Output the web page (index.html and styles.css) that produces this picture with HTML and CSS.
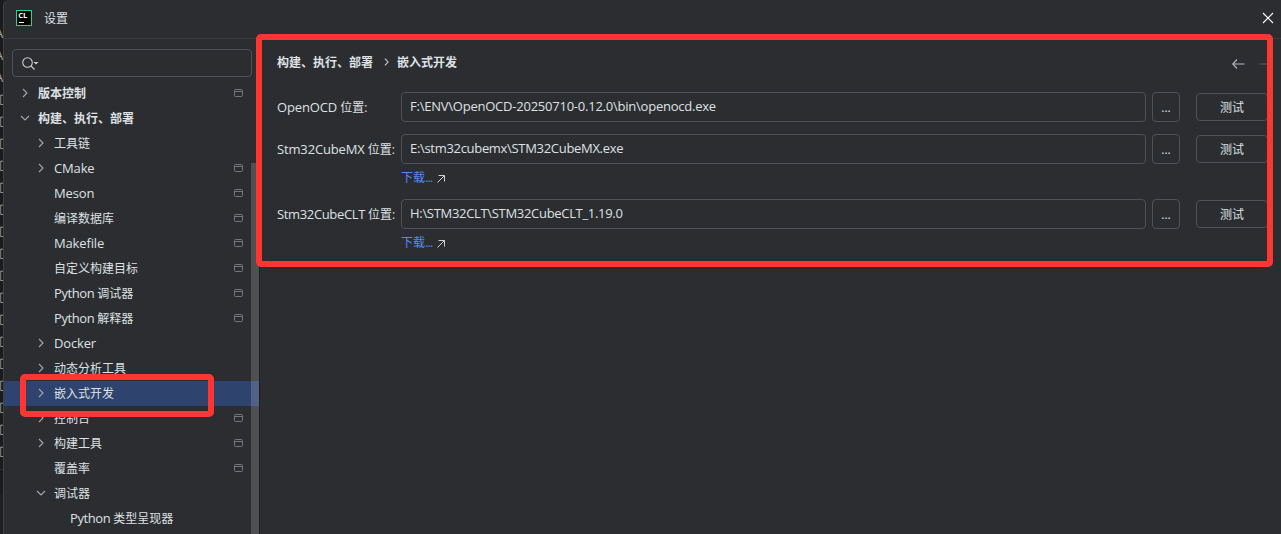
FILE: index.html
```
<!DOCTYPE html>
<html lang="zh-CN">
<head>
    <meta charset="UTF-8">
    <meta name="viewport" content="width=device-width, initial-scale=1.0">
    <title>设置</title>
    <link rel="stylesheet" href="styles.css">
</head>
<body>
    <!-- Shared icons -->
    <svg class="icon-defs" width="0" height="0">
        <symbol id="right" viewBox="0 0 16 16"><path d="M6 4l4 4-4 4" fill="none" stroke="#a4a7ae" stroke-width="1.1"/></symbol>
        <symbol id="down" viewBox="0 0 16 16"><path d="M4 6l4 4 4-4" fill="none" stroke="#a4a7ae" stroke-width="1.1"/></symbol>
        <symbol id="project" viewBox="0 0 10 9"><path d="M1.5.5h6q1 0 1 1v5q0 1-1 1h-6q-1 0-1-1v-5q0-1 1-1zM.5 2.5h8" fill="none" stroke="#74777e"/></symbol>
        <symbol id="external" viewBox="0 0 8 8"><path d="M.5 7.5l7-7M1.5.5h6v6" fill="none" stroke="#ced0d6"/></symbol>
    </svg>

    <div class="editor">
        <p>A</p><p>A</p><p>A</p><p>□</p><p>□</p><p>□</p><p>□</p><p>□</p><p>□</p><p>□</p>
        <p>□</p><p>□</p><p>□</p><p>□</p><p>□</p><p>□</p><p>□</p><p>□</p><p>□</p><p>□</p>
    </div>

    <div class="dialog">
        <header>
            <svg class="logo" width="16" height="16" viewBox="0 0 16 16">
                <rect x=".5" y=".5" width="15" height="15" fill="#000" stroke="#21d789"/>
                <text x="2.3" y="8" class="logo-text">CL</text>
                <path d="M3 12.5h5" stroke="#fff"/>
            </svg>
            <h1>设置</h1>
            <svg class="close" width="12" height="12" viewBox="0 0 12 12"><path d="M1 1l10 10M11 1L1 11" stroke="#fff" stroke-width="1.1"/></svg>
        </header>

        <div class="content">
            <aside>
                <div class="search">
                    <svg width="18" height="14" viewBox="0 0 18 14">
                        <circle cx="5.5" cy="5.5" r="4.8" fill="none" stroke="#ced0d6" stroke-width="1.1"/>
                        <path d="M9 9l3.5 3.5" stroke="#ced0d6" stroke-width="1.1"/>
                        <path d="M11.5 5h5l-2.500 2.500z" fill="#ced0d6"/>
                    </svg>
                </div>
                <ul class="tree">
                    <li class="bold"><svg class="arrow"><use href="#right"/></svg>版本控制<svg class="project"><use href="#project"/></svg></li>
                    <li class="bold"><svg class="arrow"><use href="#down"/></svg>构建、执行、部署</li>
                    <li class="level2"><svg class="arrow"><use href="#right"/></svg>工具链</li>
                    <li class="level2"><svg class="arrow"><use href="#right"/></svg><span class="en">CMake</span><svg class="project"><use href="#project"/></svg></li>
                    <li class="level2 leaf"><span class="en">Meson</span><svg class="project"><use href="#project"/></svg></li>
                    <li class="level2 leaf">编译数据库<svg class="project"><use href="#project"/></svg></li>
                    <li class="level2 leaf"><span class="en">Makefile</span><svg class="project"><use href="#project"/></svg></li>
                    <li class="level2 leaf">自定义构建目标<svg class="project"><use href="#project"/></svg></li>
                    <li class="level2 leaf"><span class="en python">Python&nbsp;</span>调试器<svg class="project"><use href="#project"/></svg></li>
                    <li class="level2 leaf"><span class="en python">Python&nbsp;</span>解释器<svg class="project"><use href="#project"/></svg></li>
                    <li class="level2"><svg class="arrow"><use href="#right"/></svg><span class="en">Docker</span></li>
                    <li class="level2"><svg class="arrow"><use href="#right"/></svg>动态分析工具</li>
                    <li class="level2 selected"><svg class="arrow"><use href="#right"/></svg>嵌入式开发</li>
                    <li class="level2"><svg class="arrow"><use href="#right"/></svg>控制台<svg class="project"><use href="#project"/></svg></li>
                    <li class="level2"><svg class="arrow"><use href="#right"/></svg>构建工具<svg class="project"><use href="#project"/></svg></li>
                    <li class="level2 leaf">覆盖率<svg class="project"><use href="#project"/></svg></li>
                    <li class="level2"><svg class="arrow"><use href="#down"/></svg>调试器</li>
                    <li class="level3 leaf"><span class="en python">Python&nbsp;</span>类型呈现器</li>
                </ul>
                <div class="scrollbar"></div>
            </aside>

            <main>
                <div class="breadcrumb">
                    <span>构建、执行、部署</span>
                    <svg width="5" height="8" viewBox="0 0 5 8"><path d="M1 .7L4 4 1 7.300" fill="none" stroke="#ced0d6" stroke-width="1.1"/></svg>
                    <span>嵌入式开发</span>
                    <div class="history">
                        <svg width="13" height="10" viewBox="0 0 13 10"><path d="M5 .5L.8 5 5 9.500M1 5h11.500" fill="none" stroke="#b4b8bf" stroke-width="1.1"/></svg>
                        <svg width="13" height="10" viewBox="0 0 13 10"><path d="M8 .5L12.200 5 8 9.500M12 5H.5" fill="none" stroke="#5a5d63" stroke-width="1.1"/></svg>
                    </div>
                </div>

                <div class="row">
                    <label><span class="en">OpenOCD&nbsp;</span>位置:</label>
                    <div class="field long">F:\ENV\OpenOCD-20250710-0.12.0\bin\openocd.exe</div>
                    <button class="browse">...</button>
                    <button class="test">测试</button>
                </div>
                <div class="row">
                    <label><span class="en">Stm32CubeMX&nbsp;</span>位置:</label>
                    <div class="field">E:\stm32cubemx\STM32CubeMX.exe</div>
                    <button class="browse">...</button>
                    <button class="test">测试</button>
                </div>
                <a class="download">下载<span class="dots">...</span><svg width="8" height="8"><use href="#external"/></svg></a>
                <div class="row">
                    <label><span class="en narrow">Stm32CubeCLT&nbsp;</span>位置:</label>
                    <div class="field">H:\STM32CLT\STM32CubeCLT_1.19.0</div>
                    <button class="browse">...</button>
                    <button class="test">测试</button>
                </div>
                <a class="download">下载<span class="dots">...</span><svg width="8" height="8"><use href="#external"/></svg></a>
            </main>
        </div>
    </div>

    <!-- Red markers -->
    <div class="mark mark-form"></div>
    <div class="mark mark-tree"></div>
</body>
</html>
```

FILE: styles.css
```
* {
    margin: 0;
    padding: 0;
    box-sizing: border-box;
}

body {
    width: 1281px;
    height: 534px;
    overflow: hidden;
    display: flex;
    background-color: #1e1f22;
    color: #dfe1e5;
    font-family: "Open Sans", "Noto Sans CJK SC", sans-serif;
    font-size: 12px;
}

.icon-defs {
    position: absolute;
}

/* Editor behind the dialog */
.editor {
    width: 3px;
    height: 494px;
    padding-top: 22px;
    overflow: hidden;
    background: linear-gradient(#2b2d30, #2b2d30) 0 469px / 3px 1px no-repeat #191b1d;
    color: #a9abb0;
    font-size: 13px;
}

.editor p {
    height: 22px;
    line-height: 22px;
    margin-left: -5px;
}

.editor p:nth-child(n+4) {
    margin-left: -1px;
    font-family: "DejaVu Sans", sans-serif;
}

/* Dialog */
.dialog {
    flex: 1;
    height: 534px;
    display: flex;
    flex-direction: column;
    background-color: #2b2d30;
    border-left: 1px solid #43413d;
    border-top-left-radius: 6px;
}

header {
    height: 39px;
    display: flex;
    align-items: center;
    padding: 0 7px 2px 12px;
    border-bottom: 1px solid #393b40;
}

header h1 {
    flex: 1;
    margin-left: 12px;
    font-size: 12px;
    font-weight: normal;
}

.logo-text {
    font: bold 7.5px "Open Sans", sans-serif;
    fill: #fff;
}

.content {
    flex: 1;
    display: flex;
    min-height: 0;
}

/* Settings tree */
aside {
    position: relative;
    width: 256px;
    padding-top: 10px;
    border-right: 1px solid #1e1f22;
}

.search {
    width: 240px;
    height: 28px;
    margin-left: 8px;
    padding: 7px 9px;
    border: 1px solid #4e5157;
    border-radius: 4px;
}

.search svg {
    display: block;
}

.tree {
    list-style: none;
    margin-top: 4px;
}

.tree li {
    height: 25px;
    display: flex;
    align-items: center;
    padding-left: 13px;
    padding-bottom: 1px;
}

.tree .level2 {
    padding-left: 29px;
}

.tree .level2.leaf {
    padding-left: 50px;
}

.tree .level3.leaf {
    padding-left: 66px;
}

.tree .bold {
    font-weight: bold;
}

.tree .selected {
    background-color: #2e436e;
}

.arrow {
    width: 16px;
    height: 16px;
    margin-right: 5px;
}

.project {
    width: 10px;
    height: 9px;
    margin-left: auto;
    margin-right: 15px;
}

.en {
    font-size: 13px;
    letter-spacing: -0.15px;
}

.en.python {
    letter-spacing: -0.4px;
}

.en.narrow {
    letter-spacing: -0.35px;
}

.scrollbar {
    position: absolute;
    top: 124px;
    right: 0;
    bottom: 0;
    width: 8px;
    background-color: rgba(255, 255, 255, 0.17);
}

/* Form */
main {
    flex: 1;
    padding: 12px 13px 0 17px;
}

.breadcrumb {
    height: 22px;
    display: flex;
    align-items: center;
    font-weight: bold;
    margin-bottom: 19px;
}

.breadcrumb svg {
    margin: 0 8px 0 11px;
}

.history {
    margin: 0 -4px 0 auto;
    padding-top: 4px;
    display: flex;
    gap: 14px;
}

.history svg {
    margin: 0;
}

.row {
    height: 30px;
    display: flex;
    align-items: center;
    margin-bottom: 12px;
}

label {
    width: 124px;
    display: flex;
    align-items: center;
    white-space: nowrap;
}

.field {
    width: 745px;
    height: 30px;
    line-height: 27px;
    padding-left: 8px;
    border: 1px solid #4e5157;
    border-radius: 4px;
    font-size: 13px;
    letter-spacing: -0.31px;
}

.field.long {
    letter-spacing: -0.23px;
}

button {
    background: none;
    color: #dfe1e5;
    border: 1px solid #4e5157;
    border-radius: 4px;
    font-family: inherit;
    font-size: 12px;
}

.browse {
    width: 28px;
    height: 30px;
    margin-left: 6px;
}

.test {
    width: 72px;
    height: 28px;
    margin-left: 16px;
}

.download {
    height: 18px;
    display: flex;
    align-items: center;
    margin: -8px 0 13px 124px;
    color: #548af7;
}

.dots {
    letter-spacing: -0.6px;
}

.download svg {
    margin: 3px 0 0 4px;
}

/* Markers drawn over the window */
.mark {
    position: absolute;
    border: 6px solid #fd3634;
    border-radius: 5px;
}

.mark-form {
    left: 256px;
    top: 34px;
    width: 1017px;
    height: 233px;
}

.mark-tree {
    left: 20px;
    top: 374px;
    width: 194px;
    height: 43px;
}
```
